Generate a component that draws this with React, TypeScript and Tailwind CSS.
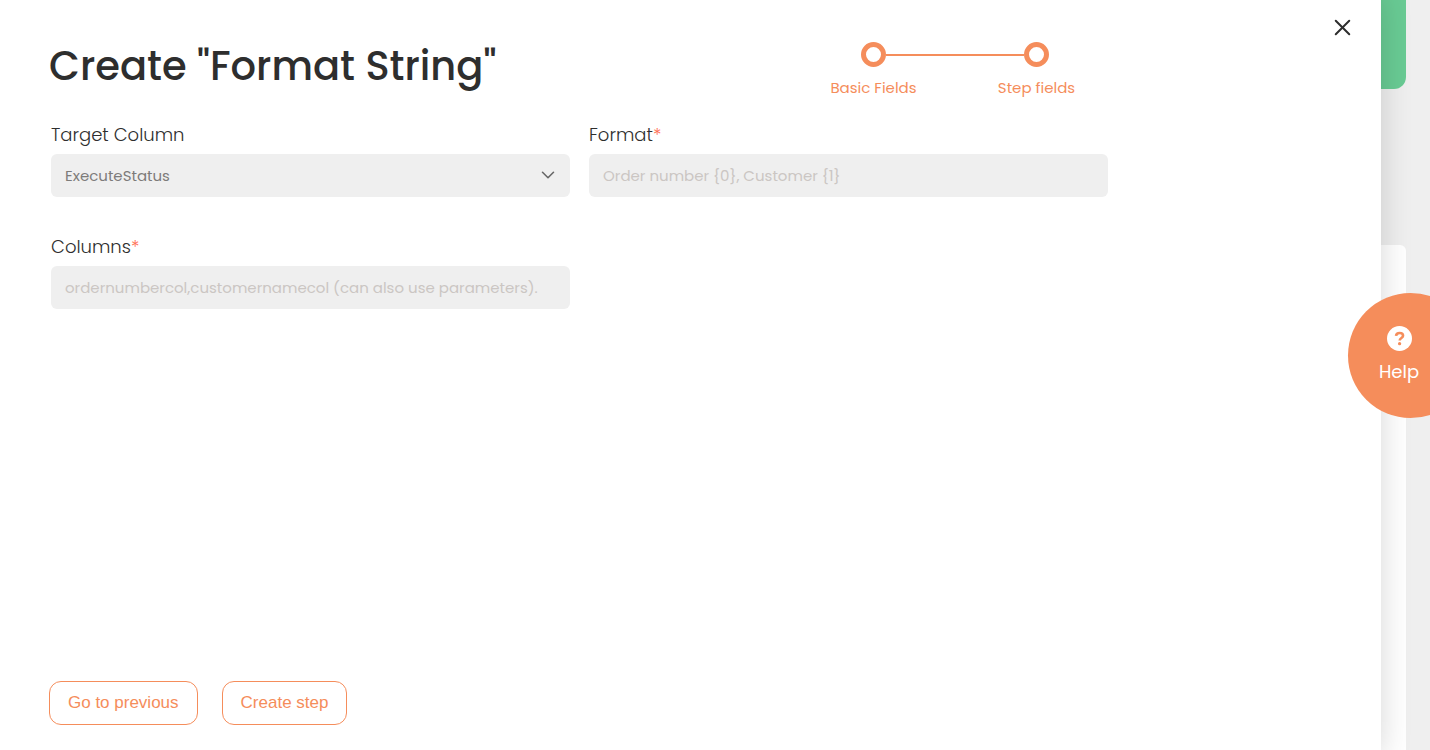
import type { ReactNode } from "react"
import { ChevronDown, X } from "lucide-react"

const STEPS = ["Basic Fields", "Step fields"]

const fieldClass =
  "h-[43px] w-full rounded-md bg-[#efefef] px-3.5 text-[15px] outline-none placeholder:text-[#cbc6c3] placeholder:opacity-100"

function Field({
  id,
  label,
  required,
  children,
}: {
  id: string
  label: string
  required?: boolean
  children: ReactNode
}) {
  return (
    <div className="flex flex-col gap-[7px]">
      <label htmlFor={id} className="text-[18px] leading-6 font-light text-[#2e2e2e]">
        {label}
        {required && <span className="text-[#ff6f55]">*</span>}
      </label>
      {children}
    </div>
  )
}

function Stepper() {
  return (
    <ol className="flex w-[326px] shrink-0 text-[#f58d5b]">
      {STEPS.map((step, i) => (
        <li key={step} className="flex flex-1 flex-col items-center gap-[9px]">
          <div className="flex w-full items-center">
            <span className={i === 0 ? "h-0.5 flex-1" : "h-0.5 flex-1 bg-[#f58d5b]"} />
            <span className="size-[25px] rounded-full border-5 border-[#f58d5b]" />
            <span
              className={i === STEPS.length - 1 ? "h-0.5 flex-1" : "h-0.5 flex-1 bg-[#f58d5b]"}
            />
          </div>
          <span className="text-[15px] leading-6">{step}</span>
        </li>
      ))}
    </ol>
  )
}

function ActionButton({ children }: { children: ReactNode }) {
  return (
    <button
      type="button"
      className="h-11 rounded-xl border border-[#f58d5b] bg-white px-[18px] font-['Liberation_Sans',Arial,sans-serif] text-[17px] text-[#f58d5b]"
    >
      {children}
    </button>
  )
}

export default function App() {
  return (
    <div className="relative h-screen overflow-hidden bg-[#efefef] font-[Poppins,Inter,sans-serif]">
      {/* Page behind the drawer */}
      <div className="flex h-full flex-col gap-[156px] pr-6" aria-hidden="true">
        <div className="h-[89px] shrink-0 rounded-br-xl bg-[#69cb94]" />
        <div className="flex-1 rounded-tr-md bg-white" />
      </div>

      <main className="absolute inset-y-0 right-[49px] left-0 flex flex-col bg-white px-[49px] pb-[25px] shadow-[-6px_0_30px_6px_rgba(0,0,0,0.16)]">
        <button type="button" aria-label="Close" className="absolute top-3.5 right-[25px]">
          <X size={27} strokeWidth={1.8} className="text-[#2e2e2e]" />
        </button>

        <header className="flex max-w-[1069px] items-start justify-between pt-[42px]">
          <h1 className="text-[40px] leading-[48px] font-medium text-[#2e2e2e]">
            Create "Format String"
          </h1>
          <Stepper />
        </header>

        <form className="flex flex-1 flex-col justify-between pt-[23px]">
          <div className="grid max-w-[1059px] grid-cols-2 gap-x-[19px] gap-y-[38px] pl-0.5">
            <Field id="target" label="Target Column">
              <div className="relative">
                <select
                  id="target"
                  className={`${fieldClass} block appearance-none pt-0.5 text-[#7d7b7a]`}
                  defaultValue="ExecuteStatus"
                >
                  <option>ExecuteStatus</option>
                </select>
                <ChevronDown
                  size={22}
                  strokeWidth={1.7}
                  className="pointer-events-none absolute top-2.5 right-[11px] text-[#666]"
                />
              </div>
            </Field>
            <Field id="format" label="Format" required>
              <input
                id="format"
                type="text"
                placeholder="Order number {0}, Customer {1}"
                className={fieldClass}
              />
            </Field>
            <Field id="columns" label="Columns" required>
              <input
                id="columns"
                type="text"
                placeholder="ordernumbercol,customernamecol (can also use parameters)."
                className={fieldClass}
              />
            </Field>
          </div>

          <div className="flex gap-6">
            <ActionButton>Go to previous</ActionButton>
            <ActionButton>Create step</ActionButton>
          </div>
        </form>
      </main>

      {/* Help bubble, partly off the right edge */}
      <button
        type="button"
        className="absolute top-[293px] -right-[43px] flex size-[125px] flex-col items-center gap-[9px] rounded-full bg-[#f58d5b] pt-[33px] pr-[23px] text-white"
      >
        <svg viewBox="0 0 26 26" className="size-[25px]" fill="none" aria-hidden="true">
          <circle cx="13" cy="13" r="13" fill="#fff" />
          <path
            d="M9.4 10.2C9.6 8.2 11 7.2 13.1 7.2c2.1 0 3.6 1.1 3.6 2.9 0 2.5-3.5 2.3-3.5 5"
            stroke="#f58d5b"
            strokeWidth="2.7"
          />
          <circle cx="13.1" cy="18.4" r="1.7" fill="#f58d5b" />
        </svg>
        <span className="text-[18px] leading-6">Help</span>
      </button>
    </div>
  )
}
